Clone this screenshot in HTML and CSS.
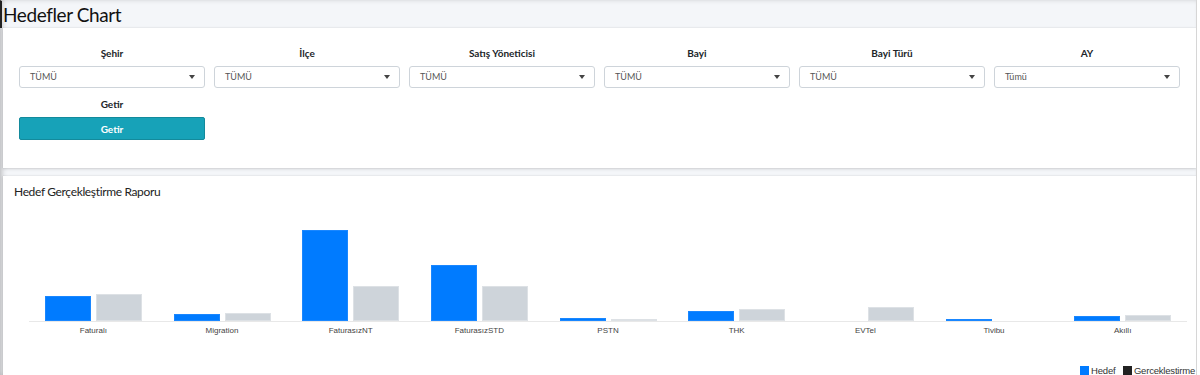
FILE: index.html
```html
<!DOCTYPE html>
<html lang="tr">
<head>
    <meta charset="UTF-8">
    <meta name="viewport" content="width=device-width, initial-scale=1.0">
    <title>Hedefler Chart</title>
    <link rel="stylesheet" href="styles.css">
</head>
<body>
    <div class="wrapper">
        <div class="page-header">
            <h1>Hedefler Chart</h1>
        </div>

        <!-- Filters -->
        <section class="card filter-card">
            <div class="filter-row">
                <div class="filter-col">
                    <label>Şehir</label>
                    <div class="select-box">TÜMÜ</div>
                </div>
                <div class="filter-col">
                    <label>İlçe</label>
                    <div class="select-box">TÜMÜ</div>
                </div>
                <div class="filter-col">
                    <label>Satış Yöneticisi</label>
                    <div class="select-box">TÜMÜ</div>
                </div>
                <div class="filter-col">
                    <label>Bayi</label>
                    <div class="select-box">TÜMÜ</div>
                </div>
                <div class="filter-col">
                    <label>Bayi Türü</label>
                    <div class="select-box">TÜMÜ</div>
                </div>
                <div class="filter-col">
                    <label>AY</label>
                    <div class="select-box">Tümü</div>
                </div>
            </div>
            <div class="filter-row">
                <div class="filter-col">
                    <label>Getir</label>
                    <button class="btn-getir">Getir</button>
                </div>
            </div>
        </section>

        <!-- Chart -->
        <section class="card chart-card">
            <h2 class="chart-title">Hedef Gerçekleştirme Raporu</h2>
            <div class="chart">
                <div class="bars">
                    <div class="group">
                        <div class="bar hedef" style="height:25px"></div>
                        <div class="bar gercek" style="height:27px"></div>
                    </div>
                    <div class="group">
                        <div class="bar hedef" style="height:7px"></div>
                        <div class="bar gercek" style="height:8px"></div>
                    </div>
                    <div class="group">
                        <div class="bar hedef" style="height:91px"></div>
                        <div class="bar gercek" style="height:35px"></div>
                    </div>
                    <div class="group">
                        <div class="bar hedef" style="height:56px"></div>
                        <div class="bar gercek" style="height:35px"></div>
                    </div>
                    <div class="group">
                        <div class="bar hedef" style="height:3px"></div>
                        <div class="bar gercek" style="height:2px"></div>
                    </div>
                    <div class="group">
                        <div class="bar hedef" style="height:10px"></div>
                        <div class="bar gercek" style="height:12px"></div>
                    </div>
                    <div class="group">
                        <div class="bar hedef" style="height:0px"></div>
                        <div class="bar gercek" style="height:14px"></div>
                    </div>
                    <div class="group">
                        <div class="bar hedef" style="height:2px"></div>
                        <div class="bar gercek" style="height:0px"></div>
                    </div>
                    <div class="group">
                        <div class="bar hedef" style="height:5px"></div>
                        <div class="bar gercek" style="height:6px"></div>
                    </div>
                </div>
                <div class="labels">
                    <span>Faturalı</span>
                    <span>Migration</span>
                    <span>FaturasızNT</span>
                    <span>FaturasızSTD</span>
                    <span>PSTN</span>
                    <span>THK</span>
                    <span>EVTel</span>
                    <span>Tivibu</span>
                    <span>Akıllı</span>
                </div>
            </div>
            <div class="legend">
                <span class="legend-item"><i class="swatch blue"></i>Hedef</span>
                <span class="legend-item"><i class="swatch dark"></i>Gerceklestirme</span>
            </div>
        </section>
    </div>
</body>
</html>
```

FILE: styles.css
```css
/* General */
body {
    margin: 0;
    font-family: Lato, 'Noto Sans', sans-serif;
    color: #212529;
    background: #fff;
    overflow: hidden;
}

.wrapper {
    width: 1196px;
    height: 375px;
    background: #f4f6f9;
    border-right: 1px solid #d6d6d6;
    box-shadow: inset 3px 0 6px -2px rgba(0, 0, 0, 0.3);
    overflow: hidden;
}

/* Header */
.page-header {
    height: 27px;
    border-top: 1px solid #e4e4e4;
    border-left: 2px solid #222;
    width: 0;
    overflow: visible;
    white-space: nowrap;
}

.page-header h1 {
    margin: 0;
    padding-left: 1px;
    font-size: 19px;
    font-weight: 400;
    letter-spacing: -0.4px;
    line-height: 27px;
    color: #111;
}

/* Cards */
.card {
    background: #fff;
    margin-left: 3px;
    box-shadow: 0 0 1px rgba(0, 0, 0, 0.15), 0 1px 3px rgba(0, 0, 0, 0.15);
}

.filter-card {
    height: 140px;
    padding: 12px 0 0 16px;
    box-sizing: border-box;
    margin-bottom: 8px;
}

.filter-row {
    display: flex;
}

.filter-col {
    flex: 0 0 195px;
    padding-right: 4px;
    box-sizing: border-box;
    display: flex;
    flex-direction: column;
}

.filter-col label {
    display: block;
    text-align: center;
    font-size: 10px;
    font-weight: 700;
    line-height: 14px;
    margin: 6px 5px 6px 0;
}

.select-box {
    position: relative;
    height: 22px;
    margin-right: 5px;
    border: 1px solid #ced4da;
    border-radius: 3px;
    box-sizing: border-box;
    font-size: 9px;
    line-height: 20px;
    padding-left: 10px;
    color: #555;
}

.select-box::after {
    content: '';
    position: absolute;
    right: 9px;
    top: 8px;
    border-left: 3px solid transparent;
    border-right: 3px solid transparent;
    border-top: 4px solid #444;
}

.filter-row + .filter-row label {
    margin-top: 9px;
}

.btn-getir {
    height: 23px;
    margin-right: 5px;
    background: #17a2b8;
    color: #fff;
    border: 1px solid #138a9c;
    border-radius: 2px;
    font-family: inherit;
    font-size: 10px;
    font-weight: 700;
    cursor: pointer;
}

/* Chart card */
.chart-card {
    height: 200px;
    position: relative;
    padding: 8px 0 0 11px;
    box-sizing: border-box;
}

.chart-title {
    margin: 0;
    font-size: 12px;
    font-weight: 400;
    letter-spacing: -0.35px;
    line-height: 16px;
    color: #222;
}

.chart {
    margin-left: 15px;
    width: 1158px;
}

.bars {
    display: flex;
    align-items: flex-end;
    height: 121px;
    border-bottom: 1px solid #e8e8e8;
}

.group {
    flex: 1;
    display: flex;
    align-items: flex-end;
    justify-content: center;
    gap: 5px;
}

.bar {
    width: 46px;
    box-sizing: border-box;
}

.bar.hedef {
    background: #007bff;
    border: 1px solid #1a87ff;
}

.bar.gercek {
    background: #ced4da;
    border: 1px solid #dde1e5;
}

.bar[style*="height:0px"] {
    border: none;
}

.labels {
    display: flex;
    margin-top: 4px;
}

.labels span {
    flex: 1;
    text-align: center;
    font-family: 'Liberation Sans', Arial, sans-serif;
    font-size: 8px;
    color: #444;
}

/* Legend */
.legend {
    position: absolute;
    right: 1px;
    bottom: 0;
    font-family: 'Liberation Sans', Arial, sans-serif;
    font-size: 9.5px;
    letter-spacing: -0.2px;
    line-height: 11px;
    color: #333;
    white-space: nowrap;
}

.legend-item {
    margin-left: 5px;
}

.swatch {
    display: inline-block;
    width: 9px;
    height: 9px;
    margin-right: 2px;
    vertical-align: -1px;
}

.swatch.blue {
    background: #007bff;
}

.swatch.dark {
    background: #222;
}
```
